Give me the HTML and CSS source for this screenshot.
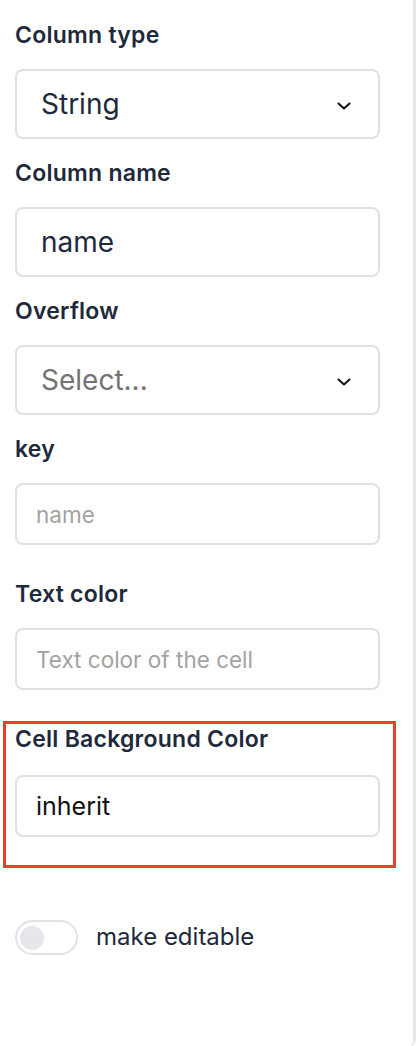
FILE: index.html
```html
<!DOCTYPE html>
<html>
<head>
<meta charset="utf-8">
<link rel="stylesheet" href="styles.css">
</head>
<body>
<div class="panel">
  <div class="field">
    <div class="label">Column type</div>
    <div class="select">
      <span class="value">String</span>
      <svg class="chev" width="14" height="8" viewBox="0 0 14 8"><path d="M1.5 1.5 L7 6.5 L12.5 1.5" fill="none" stroke="#111" stroke-width="2" stroke-linecap="round" stroke-linejoin="round"/></svg>
    </div>
  </div>
  <div class="field">
    <div class="label">Column name</div>
    <div class="select">
      <span class="value">name</span>
    </div>
  </div>
  <div class="field">
    <div class="label">Overflow</div>
    <div class="select">
      <span class="value placeholder-dark">Select...</span>
      <svg class="chev" width="14" height="8" viewBox="0 0 14 8"><path d="M1.5 1.5 L7 6.5 L12.5 1.5" fill="none" stroke="#111" stroke-width="2" stroke-linecap="round" stroke-linejoin="round"/></svg>
    </div>
  </div>
  <div class="field">
    <div class="label">key</div>
    <div class="input"><span class="placeholder">name</span></div>
  </div>
  <div class="field spaced">
    <div class="label">Text color</div>
    <div class="input"><span class="placeholder">Text color of the cell</span></div>
  </div>
  <div class="field highlighted">
    <div class="label">Cell Background Color</div>
    <div class="input"><span class="text">inherit</span></div>
  </div>
  <div class="toggle-row">
    <div class="toggle"><div class="knob"></div></div>
    <span class="toggle-label">make editable</span>
  </div>
</div>
</body>
</html>
```

FILE: styles.css
```css
html, body {
  margin: 0;
  padding: 0;
  background: #ffffff;
}
body {
  font-family: "Inter", "Liberation Sans", sans-serif;
  height: 1046px;
  overflow: hidden;
}
.panel {
  box-sizing: border-box;
  width: 416px;
  height: 1046px;
  padding: 22px 33px 0 15px;
  border-right: 3px solid #e8e8e8;
  border-bottom-right-radius: 6px;
  display: flex;
  flex-direction: column;
  gap: 21px;
}
.field {
  display: flex;
  flex-direction: column;
}
.field.spaced {
  margin-top: 15px;
}
.label {
  font-size: 23px;
  font-weight: 600;
  line-height: 26px;
  letter-spacing: 0.25px;
  color: #1e293b;
  margin-bottom: 21px;
}
.select {
  box-sizing: border-box;
  height: 70px;
  border: 2px solid #e0e0e0;
  border-radius: 8px;
  display: flex;
  align-items: center;
  justify-content: space-between;
  padding: 0 27px 0 24px;
}
.value {
  font-size: 28px;
  color: #1e293b;
}
.placeholder-dark {
  color: #737373;
}
.chev {
  margin-top: 4px;
}
.input {
  box-sizing: border-box;
  height: 62px;
  border: 2px solid #e0e0e0;
  border-radius: 8px;
  display: flex;
  align-items: center;
  padding: 0 19px;
}
.placeholder {
  font-size: 22.5px;
  color: #a3a3a3;
}
.text {
  font-size: 25px;
  color: #111111;
}
.field.highlighted {
  margin: 10px -16px 0 -12px;
  border: 3px solid #e8432a;
  padding: 2px 13px 28px 9px;
}
.field.highlighted .label {
  margin-bottom: 23px;
}
.toggle-row {
  margin-top: 31px;
  display: flex;
  align-items: center;
  gap: 18px;
}
.toggle {
  box-sizing: border-box;
  width: 63px;
  height: 35px;
  border: 2px solid #e2e2e2;
  border-radius: 18px;
  display: flex;
  align-items: center;
  padding-left: 3px;
}
.knob {
  width: 24px;
  height: 24px;
  border-radius: 50%;
  background: #e5e7eb;
}
.toggle-label {
  font-size: 24px;
  color: #1e293b;
  margin-top: -2px;
}
```
